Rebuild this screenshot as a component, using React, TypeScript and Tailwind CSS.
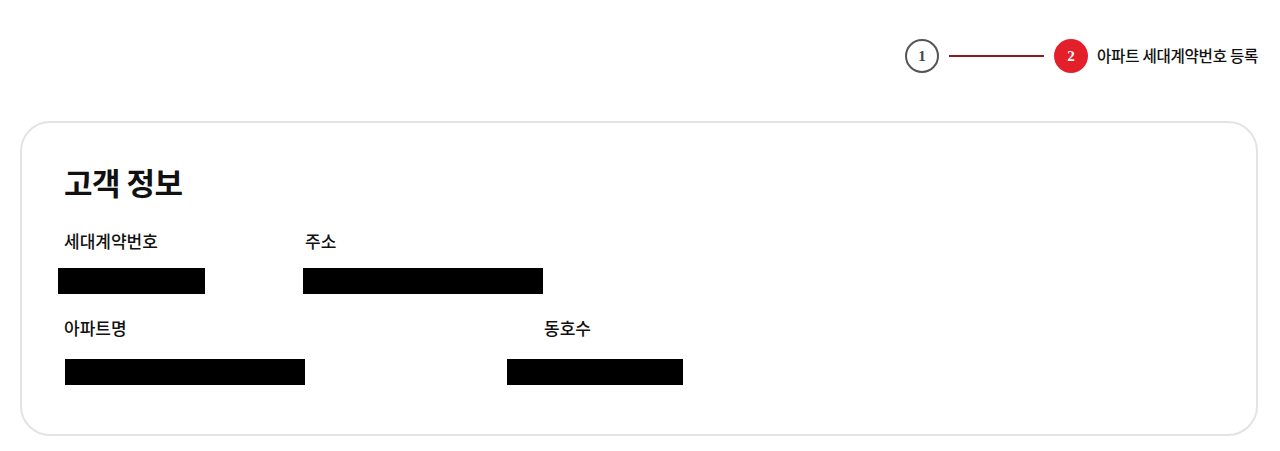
export default function App() {
  return (
    <div
      className="w-[1280px] h-[451px] bg-white text-[#111]"
      style={{ fontFamily: '"Noto Sans CJK KR", "Noto Sans", sans-serif' }}
    >
      {/* Stepper */}
      <div className="flex justify-end items-start pt-[39px] pr-[22px] h-[121px]">
        <div className="flex items-center">
          <div
            className="w-[34px] h-[34px] rounded-full border-2 border-[#555] flex items-center justify-center text-[15px] text-[#444] font-semibold"
            style={{ fontFamily: '"Liberation Serif", serif' }}
          >
            1
          </div>
          <div className="w-[95px] h-[2px] bg-[#8e1a1f] mx-[10px]" />
          <div
            className="w-[34px] h-[34px] rounded-full bg-[#e3202a] flex items-center justify-center text-[15px] text-white font-bold"
            style={{ fontFamily: '"Liberation Serif", serif' }}
          >
            2
          </div>
          <span className="ml-[9px] text-[15.6px] font-medium tracking-[-0.3px]">아파트 세대계약번호 등록</span>
        </div>
      </div>

      {/* Card */}
      <div className="ml-[20px] w-[1238px] h-[315px] border-2 border-[#e3e3e3] rounded-[30px] pt-[39px] px-[42px]">
        <h2 className="text-[31px] font-bold leading-[40px] tracking-[-0.5px]">고객 정보</h2>

        <div className="flex mt-[27px]">
          <div className="w-[241px]">
            <div className="text-[17px] font-medium leading-[24px]">세대계약번호</div>
            <div className="mt-[15px] -ml-[6px] w-[147px] h-[26px] bg-black" />
          </div>
          <div>
            <div className="text-[17px] font-medium leading-[24px]">주소</div>
            <div className="mt-[15px] -ml-[2px] w-[240px] h-[26px] bg-black" />
          </div>
        </div>

        <div className="flex mt-[22px]">
          <div className="w-[480px]">
            <div className="text-[17px] font-medium leading-[24px]">아파트명</div>
            <div className="mt-[19px] ml-[1px] w-[240px] h-[26px] bg-black" />
          </div>
          <div>
            <div className="text-[17px] font-medium leading-[24px]">동호수</div>
            <div className="mt-[19px] -ml-[37px] w-[176px] h-[26px] bg-black" />
          </div>
        </div>
      </div>
    </div>
  )
}
